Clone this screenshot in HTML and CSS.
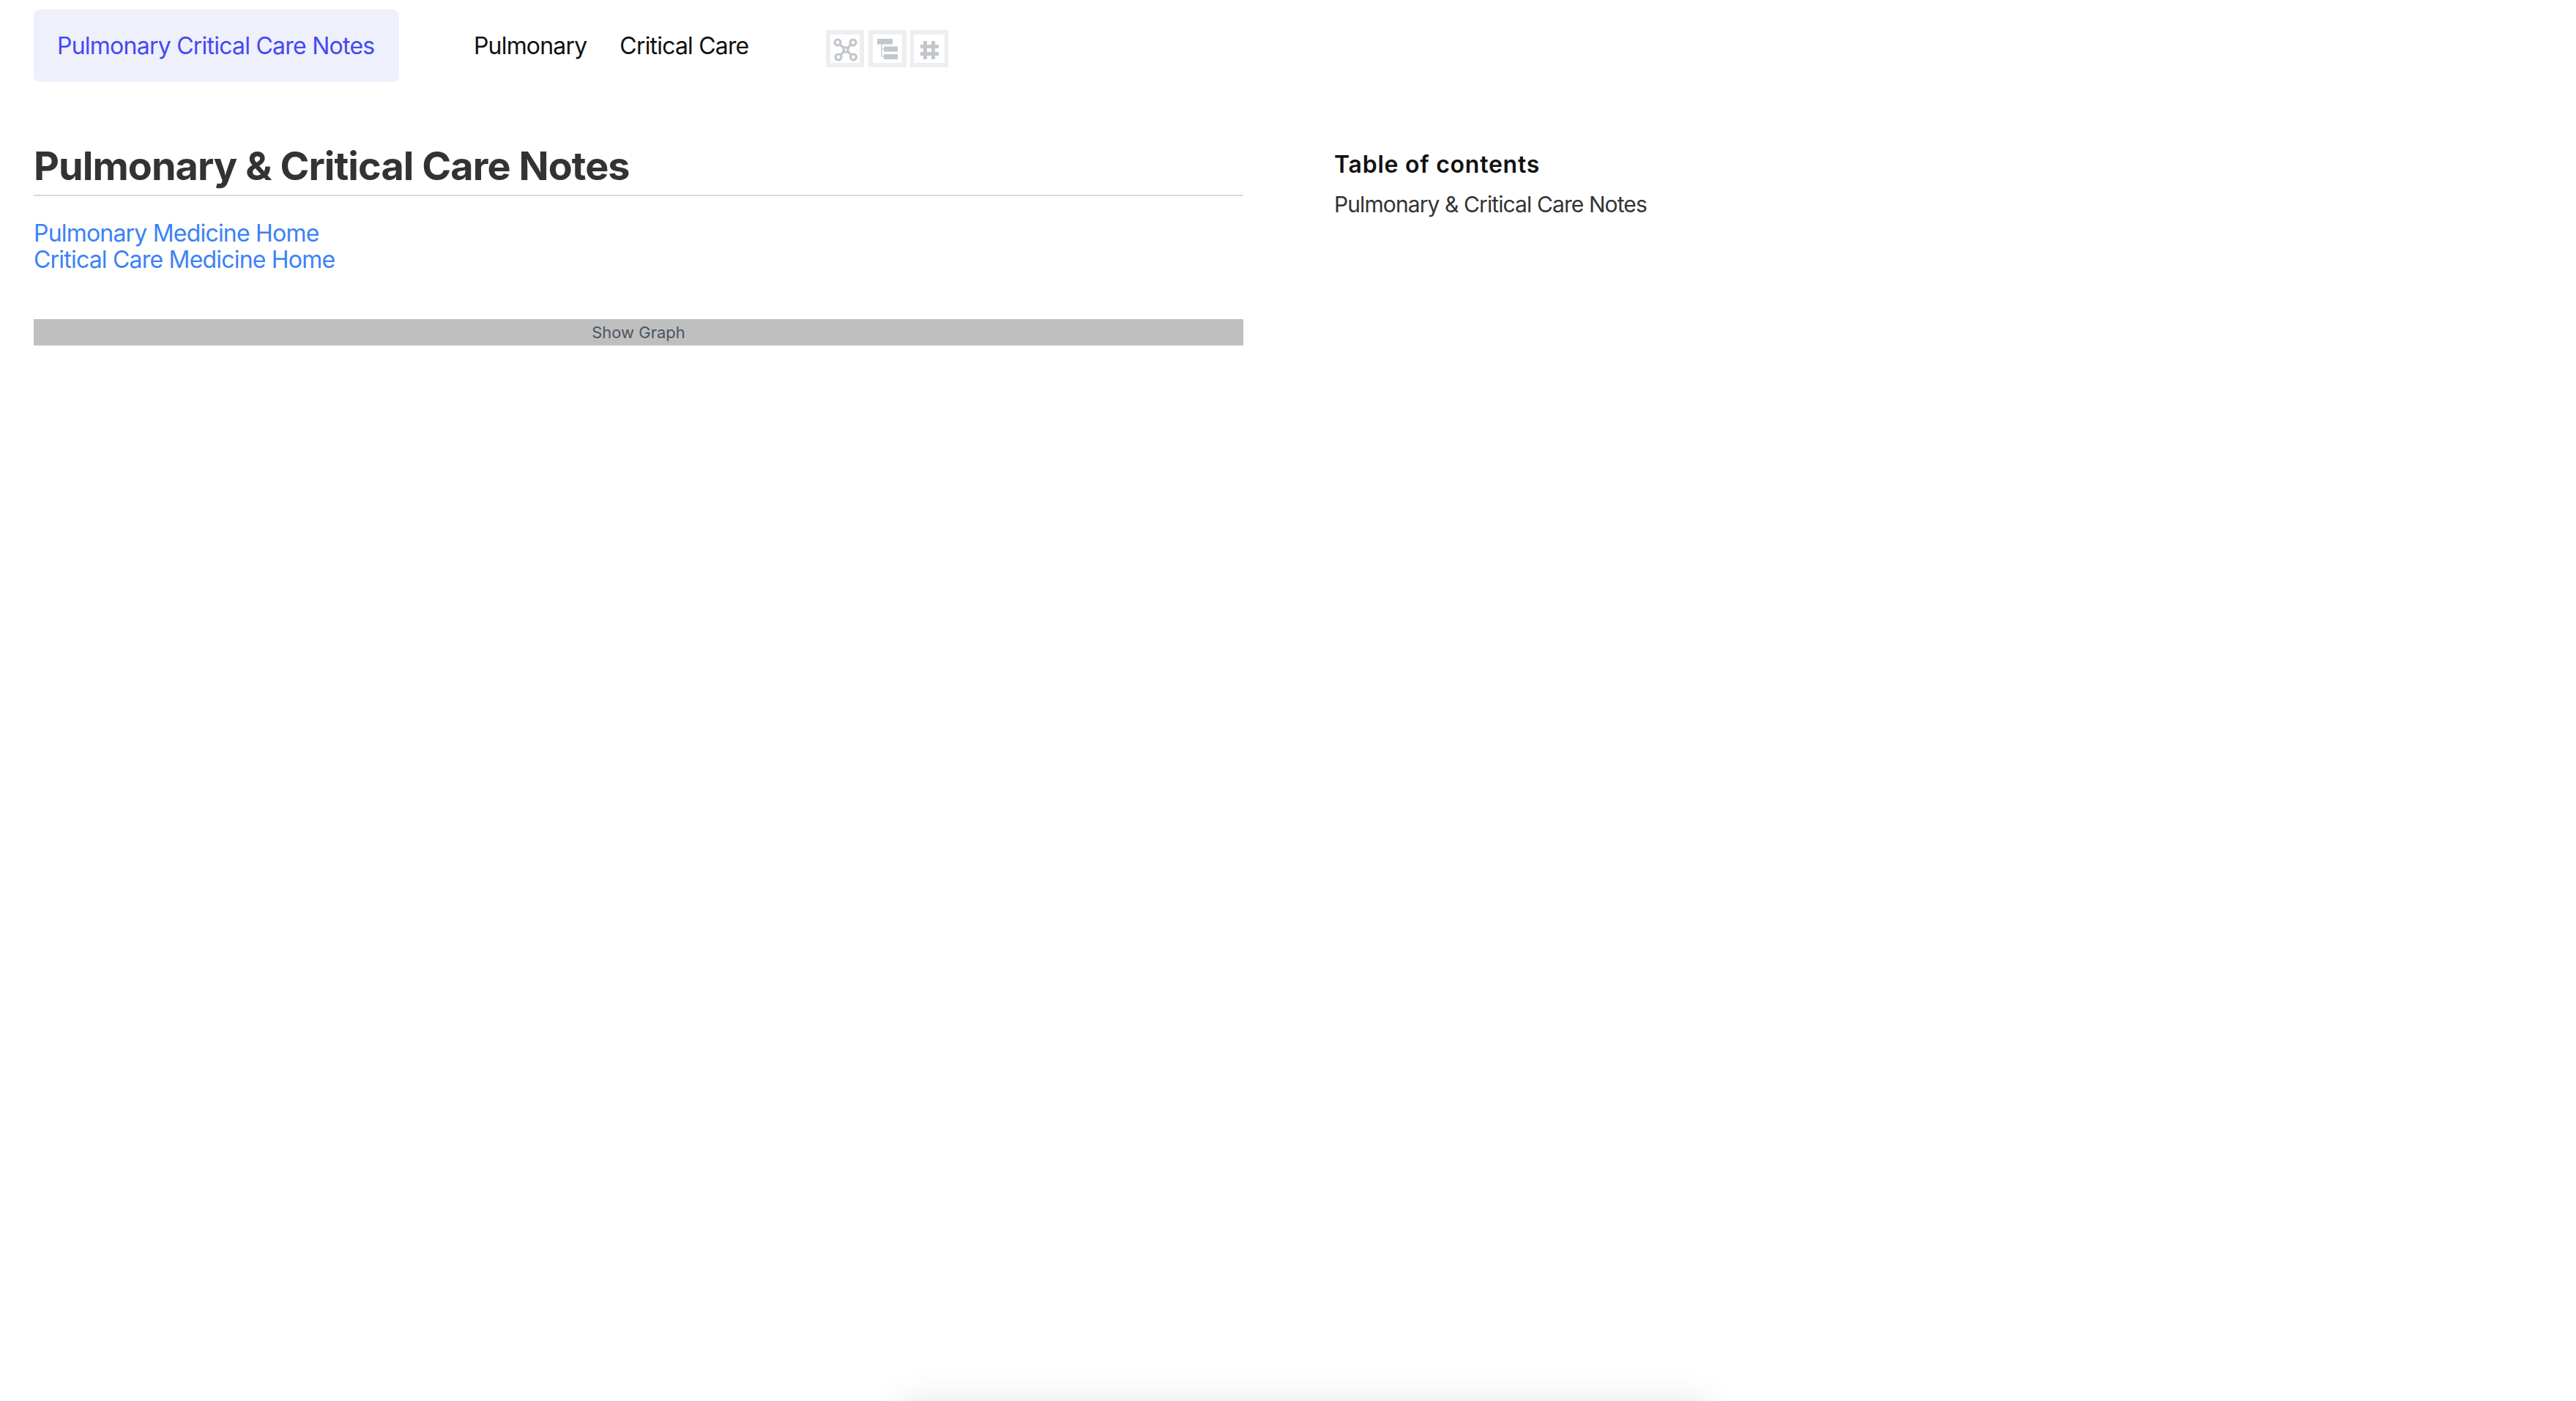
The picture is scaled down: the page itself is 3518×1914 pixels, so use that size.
FILE: index.html
```html
<!DOCTYPE html>
<html lang="en">
<head>
<meta charset="utf-8">
<title>Pulmonary Critical Care Notes</title>
<link rel="stylesheet" href="styles.css">
</head>
<body>
<header class="topbar">
  <a class="brand" href="#">Pulmonary Critical Care Notes</a>
  <nav class="nav">
    <a href="#">Pulmonary</a>
    <a href="#">Critical Care</a>
  </nav>
  <div class="tools">
    <button class="tool" aria-label="Graph">
      <svg viewBox="0 0 40 39" width="40" height="39"><g fill="none" stroke="#c0c7cd" stroke-width="3.2"><path d="M13 14 18.6 18.6M28 14 23.4 18.6M14 28 18.6 23.4M28.5 28 23.4 23.4"/><circle cx="10" cy="11" r="4"/><circle cx="31" cy="11" r="4"/><circle cx="11" cy="31" r="4"/><circle cx="31.5" cy="31" r="4"/><circle cx="21" cy="21" r="3.2"/></g></svg>
    </button>
    <button class="tool" aria-label="Outline">
      <svg viewBox="0 0 40 39" width="40" height="39"><path fill="#d3d8dc" d="M11 13h1.7v6h2.3v1.7h-2.3v8.3h2.3v1.7H11z"/><g fill="#c0c7cd"><rect x="6" y="6" width="21" height="7.5"/><rect x="15" y="16.5" width="19" height="7"/><rect x="15" y="27" width="19" height="7"/></g></svg>
    </button>
    <button class="tool tool-tag" aria-label="Tags">
      <svg viewBox="0 0 42 39" width="42" height="39"><path fill="#c0c7cd" fill-rule="evenodd" d="M13 9h5v5h6V9h5v5h5v5h-5v5h5v5h-5v5h-5v-5h-6v5h-5v-5H9v-5h4v-5H9v-5h4zM18 19v5h6v-5z"/></svg>
    </button>
  </div>
</header>
<main class="page">
  <article class="content">
    <h1 class="title">Pulmonary &amp; Critical Care Notes</h1>
    <p class="links">
      <a href="#">Pulmonary Medicine Home</a><br>
      <a href="#">Critical Care Medicine Home</a>
    </p>
    <button class="graph-toggle">Show Graph</button>
  </article>
  <aside class="toc">
    <h2 class="toc-title">Table of contents</h2>
    <a class="toc-link" href="#">Pulmonary &amp; Critical Care Notes</a>
  </aside>
</main>
<div class="bottom-shadow"></div>
</body>
</html>
```
FILE: styles.css
```css
html, body {
  margin: 0;
  height: 100%;
  background: #fff;
  overflow: hidden;
}
body {
  font-family: Inter, "Liberation Sans", sans-serif;
}
a {
  text-decoration: none;
}
.topbar {
  display: flex;
  align-items: center;
  height: 99px;
  margin-top: 13px;
  padding-left: 46px;
}
.brand {
  display: flex;
  align-items: center;
  box-sizing: border-box;
  width: 499px;
  height: 99px;
  padding-left: 32px;
  border-radius: 8px;
  background: #eef0fc;
  color: #4549f0;
  font-size: 32px;
  letter-spacing: -0.76px;
}
.nav {
  display: flex;
  gap: 45px;
  margin-left: 102px;
  font-size: 32px;
  letter-spacing: -0.82px;
}
.nav a {
  color: #111;
}
.tools {
  display: flex;
  gap: 6px;
  margin-left: 106px;
  margin-top: 8px;
}
.tool {
  display: flex;
  align-items: center;
  justify-content: center;
  box-sizing: border-box;
  width: 52px;
  height: 51px;
  padding: 0;
  border: 6px solid #eee;
  background: #fff;
}
.tool-tag {
  margin-left: -1px;
  border-width: 6px 5px;
}
.page {
  display: flex;
  padding-left: 46px;
}
.content {
  width: 1652px;
}
.title {
  margin: 82px 0 0;
  padding-bottom: 7px;
  border-bottom: 2px solid #d8d8e0;
  color: #333;
  font-size: 54px;
  font-weight: 700;
  line-height: 65px;
  letter-spacing: -0.95px;
}
.links {
  margin: 33px 0 0;
  font-size: 32px;
  line-height: 36px;
  letter-spacing: -0.8px;
}
.links a {
  color: #3b82f6;
}
.graph-toggle {
  display: block;
  width: 100%;
  height: 36px;
  margin-top: 63px;
  padding: 0;
  border: 0;
  background: #bfbfbf;
  color: #4b5563;
  font-family: inherit;
  font-size: 22px;
}
.toc {
  margin-left: 124px;
  padding-top: 93px;
}
.toc-title {
  margin: 0;
  color: #111;
  font-size: 32px;
  font-weight: 600;
  line-height: 40px;
  letter-spacing: 0.75px;
}
.toc-link {
  display: block;
  margin-top: 16px;
  color: #333;
  font-size: 30px;
  line-height: 36px;
  letter-spacing: -0.9px;
}
.bottom-shadow {
  position: fixed;
  left: 1231px;
  bottom: -60px;
  width: 1098px;
  height: 60px;
  box-shadow: 0 0 48px rgba(0, 0, 0, 0.1);
}
```
